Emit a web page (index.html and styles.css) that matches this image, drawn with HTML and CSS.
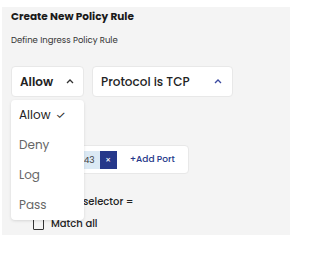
FILE: index.html
```html
<!DOCTYPE html>
<html>
<head>
<meta charset="utf-8">
<link rel="stylesheet" href="styles.css">
</head>
<body>
<div class="panel">
  <div class="title">Create New Policy Rule</div>
  <div class="subtitle">Define Ingress Policy Rule</div>
  <div class="row">
    <div class="select-wrap">
      <div class="select action">
        <span>Allow</span>
        <svg class="chev" width="8" height="5" viewBox="0 0 8 5"><path d="M1 4 L4 1 L7 4" fill="none" stroke="#333" stroke-width="1.3"/></svg>
      </div>
      <div class="menu">
        <div class="item active">Allow <span class="check">✓</span></div>
        <div class="item">Deny</div>
        <div class="item">Log</div>
        <div class="item">Pass</div>
      </div>
    </div>
    <div class="select proto">
      <span>Protocol is TCP</span>
      <svg class="chev" width="8" height="5" viewBox="0 0 8 5"><path d="M1 4 L4 1 L7 4" fill="none" stroke="#3b4aa0" stroke-width="1.3"/></svg>
    </div>
  </div>
  <div class="ports">
    <span class="tag">443</span><span class="x">×</span>
    <span class="add">+Add Port</span>
  </div>
  <div class="selector">selector =</div>
  <label class="match"><span class="box"></span>Match all</label>
</div>
</body>
</html>
```
FILE: styles.css
```css
* { box-sizing: border-box; }
body {
  margin: 0;
  background: #fff;
  font-family: "Poppins", "Inter", "Lato", sans-serif;
  color: #222;
}
.panel {
  position: relative;
  margin: 7px 0 0 2px;
  width: 288px;
  height: 228px;
  background: #f4f4f4;
  padding: 3px 9px 0 9px;
}
.title {
  font-size: 10.5px;
  font-weight: 700;
  color: #1a1a1a;
  line-height: 14px;
}
.subtitle {
  margin-top: 11px;
  font-size: 8.5px;
  color: #333;
  line-height: 10px;
}
.row {
  display: flex;
  gap: 8px;
  margin-top: 21px;
}
.select-wrap { position: relative; }
.select {
  height: 31px;
  background: #fff;
  border: 1px solid #e8e8e8;
  border-radius: 4px;
  display: flex;
  align-items: center;
  justify-content: space-between;
  font-size: 12px;
}
.action {
  width: 73px;
  padding: 0 9px 0 8px;
  font-weight: 600;
}
.proto {
  width: 141px;
  padding: 0 10px 0 8px;
  font-weight: 500;
}
.chev { display: block; }
.menu {
  position: absolute;
  left: 0;
  top: 34px;
  width: 73px;
  background: #fff;
  border-radius: 4px;
  box-shadow: 0 1px 3px rgba(0,0,0,0.12);
  z-index: 5;
}
.item {
  height: 30px;
  line-height: 30px;
  padding-left: 8px;
  font-size: 12px;
  color: #666;
}
.item.active { color: #222; }
.check { font-size: 11px; margin-left: 2px; }
.ports {
  margin-top: 48px;
  width: 178px;
  height: 29px;
  background: #fff;
  border: 1px solid #e8e8e8;
  border-radius: 4px;
  display: flex;
  align-items: center;
  padding-left: 61px;
  font-size: 9px;
}
.tag {
  background: #dbe9f4;
  color: #444;
  height: 18px;
  line-height: 18px;
  padding: 0 5px 0 5px;
}
.x {
  background: #26388a;
  color: #fff;
  width: 17px;
  height: 18px;
  line-height: 18px;
  text-align: center;
  font-size: 9px;
}
.add {
  margin-left: 13px;
  color: #26388a;
  font-weight: 500;
}
.selector {
  margin-top: 22px;
  padding-left: 72px;
  font-size: 10px;
  font-weight: 500;
  line-height: 12px;
}
.match {
  display: flex;
  align-items: center;
  margin-top: 10px;
  padding-left: 22px;
  font-size: 10px;
  font-weight: 500;
  line-height: 12px;
}
.box {
  width: 11px;
  height: 11px;
  border: 1px solid #333;
  border-radius: 1px;
  margin-right: 7px;
}
```
